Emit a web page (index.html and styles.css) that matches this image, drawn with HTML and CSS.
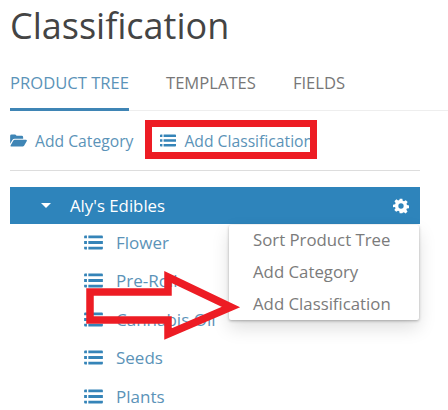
FILE: index.html
```html
<!DOCTYPE html>
<html lang="en">
<head>
<meta charset="utf-8">
<title>Classification</title>
<link rel="stylesheet" href="styles.css">
</head>
<body>
<svg width="0" height="0" class="defs">
  <symbol id="list" viewBox="0 0 20 16">
    <path d="M0 1.500a1 1 0 0 1 1-1h2v3H0zM0 6.500h3v3H0zM0 12.500h3v3H1a1 1 0 0 1-1-1zM4.500.5H19a1 1 0 0 1 1 1v2H4.500zM4.500 6.500H20v3H4.500zM4.500 12.500H20v2a1 1 0 0 1-1 1H4.500z"/>
  </symbol>
</svg>
<main class="page">
  <h1 class="title">Classification</h1>
  <nav class="tabs">
    <a class="tab active">PRODUCT TREE</a>
    <a class="tab">TEMPLATES</a>
    <a class="tab">FIELDS</a>
  </nav>
  <div class="actions">
    <a class="action">
      <svg class="folder" viewBox="0 0 18 14"><path d="M0 2a1.500 1.500 0 0 1 1.500-1.500h4l1.500 1.500h5.500A1.500 1.500 0 0 1 14 3.500V5H5a3 3 0 0 0-2.600 1.500L0 10.500zM5 6.200h12a1 1 0 0 1 .8 1.500l-2.800 5a2 2 0 0 1-1.700.8H1.200a.8.8 0 0 1-.7-1.200l3-5.200A2 2 0 0 1 5 6.200z"/></svg>
      Add Category
    </a>
    <a class="action">
      <svg class="list-icon small"><use href="#list"/></svg>
      Add Classification
    </a>
  </div>
  <div class="tree-head">
    <span class="caret"></span>
    <span class="tree-name">Aly's Edibles</span>
    <svg class="gear" viewBox="0 0 24 24"><path fill-rule="evenodd" d="M10 1h4l.6 3.200 1.900.8 2.700-1.800 2.800 2.800-1.800 2.700.8 1.900 3 .6v4l-3.200.6-.8 1.900 1.800 2.700-2.800 2.800-2.700-1.800-1.900.8L14 23h-4l-.6-3.200-1.900-.8-2.700 1.800-2.800-2.800 1.800-2.700-.8-1.900L0 14v-4l3.200-.6.800-1.900L2.200 4.800 5 2l2.700 1.800 1.900-.8zM12 8a4 4 0 1 0 0 8 4 4 0 0 0 0-8z"/></svg>
  </div>
  <ul class="tree">
    <li class="tree-item"><svg class="list-icon"><use href="#list"/></svg>Flower</li>
    <li class="tree-item"><svg class="list-icon"><use href="#list"/></svg>Pre-Roll</li>
    <li class="tree-item"><svg class="list-icon"><use href="#list"/></svg>Cannabis Oil</li>
    <li class="tree-item"><svg class="list-icon"><use href="#list"/></svg>Seeds</li>
    <li class="tree-item"><svg class="list-icon"><use href="#list"/></svg>Plants</li>
  </ul>
</main>
<ul class="menu">
  <li>Sort Product Tree</li>
  <li>Add Category</li>
  <li>Add Classification</li>
</ul>
<div class="highlight"></div>
<svg class="arrow" viewBox="0 0 170 85"><path d="M10 27H88V12L151 42L88 69V55H10Z" fill="none" stroke="#ed1c24" stroke-width="7.500"/></svg>
</body>
</html>
```
FILE: styles.css
```css
* { box-sizing: border-box; }
html, body { margin: 0; padding: 0; }
body {
  width: 448px;
  height: 410px;
  overflow: hidden;
  position: relative;
  background: #fff;
  font-family: "Open Sans", sans-serif;
}
.defs { position: absolute; }
.page { padding-top: 2px; }
.title {
  margin: 0 0 0 10px;
  font-size: 36px;
  line-height: 48px;
  font-weight: 400;
  color: #444;
}
.tabs {
  margin-top: 10px;
  margin-left: 10px;
  display: flex;
  gap: 37px;
  height: 51px;
  border-bottom: 1px solid #eee;
}
.tab {
  font-size: 16.600px;
  line-height: 46px;
  color: #777;
  height: 51px;
}
.tab.active {
  color: #5b93b8;
  border-bottom: 3px solid #3f85b5;
}
.actions {
  margin-left: 10px;
  width: 410px;
  height: 60px;
  display: flex;
  align-items: center;
  gap: 27px;
  border-bottom: 1px solid #ddd;
}
.action {
  display: flex;
  align-items: center;
  gap: 8px;
  font-size: 15.700px;
  color: #5b93b8;
}
.folder { width: 17px; height: 13px; fill: #3f85b5; }
.list-icon { width: 19px; height: 15px; fill: #3584b8; flex: none; }
.list-icon.small { width: 16px; height: 13px; }
.tree-head {
  margin: 16px 0 0 10px;
  width: 410px;
  height: 37px;
  background: #2e84bb;
  display: flex;
  align-items: center;
  padding: 0 11px 0 31px;
  color: #fff;
  font-size: 16.800px;
}
.caret {
  width: 0;
  height: 0;
  border-left: 5px solid transparent;
  border-right: 5px solid transparent;
  border-top: 5px solid #fff;
  margin-right: 19px;
}
.tree-name { flex: 1; }
.gear { width: 16px; height: 16px; fill: #fff; }
.tree {
  list-style: none;
  margin: -1px 0 0;
  padding: 0 0 0 84px;
}
.tree-item {
  height: 38.500px;
  display: flex;
  align-items: center;
  gap: 13px;
  font-size: 17px;
  color: #5b93b8;
}
.menu {
  position: absolute;
  left: 229px;
  top: 225px;
  width: 190px;
  height: 95px;
  margin: 0;
  padding: 0 0 0 24px;
  list-style: none;
  background: #fff;
  border-radius: 2px;
  box-shadow: 0 1px 3px rgba(0,0,0,.3), 0 8px 18px rgba(0,0,0,.13);
  font-size: 16.800px;
  color: #7b7b7b;
}
.menu li { height: 32px; line-height: 30px; }
.highlight {
  position: absolute;
  left: 145px;
  top: 120px;
  width: 172px;
  height: 39px;
  border: 7px solid #ed1c24;
}
.arrow {
  position: absolute;
  left: 80px;
  top: 265px;
  width: 170px;
  height: 85px;
}
```
